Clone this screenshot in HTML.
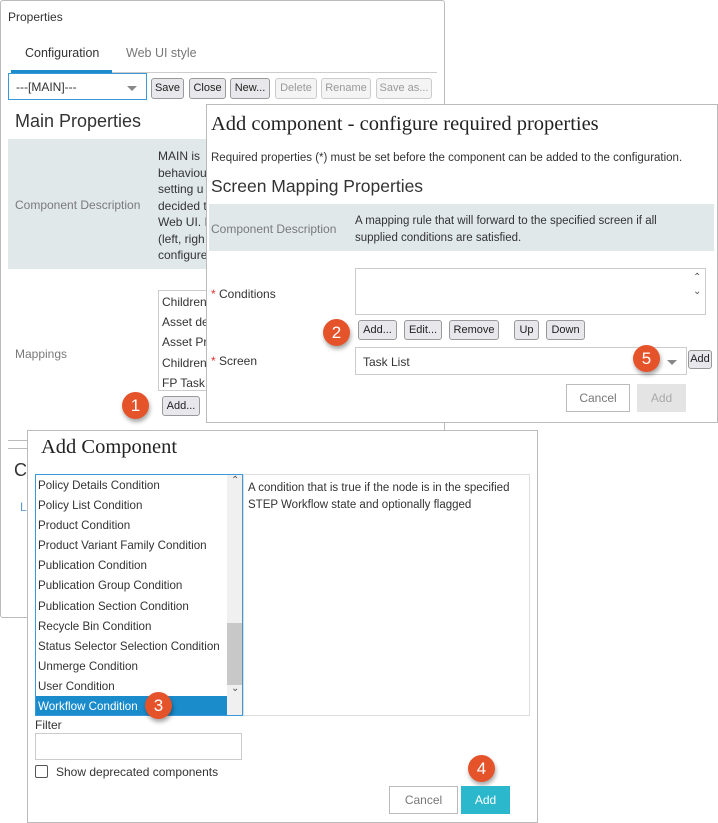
<!DOCTYPE html>
<html><head><meta charset="utf-8"><style>
*{box-sizing:border-box;margin:0;padding:0}
body{width:718px;height:823px;background:#fff;position:relative;overflow:hidden;font-family:"Liberation Sans","DejaVu Sans",sans-serif;font-size:12px;color:#333}
.a{position:absolute;white-space:nowrap}
.btn{position:absolute;border:1px solid #999;border-radius:3px;background:#e8e8ec;font-size:11px;text-align:center;color:#222}
.dis{border-color:#ccc;background:#f4f4f4;color:#999}
.badge{position:absolute;width:27px;height:27px;border-radius:50%;background:#e5532b;color:#fff;font-size:17px;text-align:center;line-height:27px;box-shadow:1px 3px 4px rgba(0,0,0,.35)}
.serif{font-family:"Liberation Serif",serif}
.grey{color:#7a7a7a}
.red{color:#d33}
</style></head><body>
<div class="a" style="left:0;top:0;width:445px;height:618px;border:1px solid #bbb;border-radius:3px;background:#fff"></div>
<div class="a" style="left:8px;top:10px;font-size:12px">Properties</div>
<div class="a" style="left:25px;top:46px;font-size:12.5px;color:#333">Configuration</div>
<div class="a" style="left:126px;top:46px;font-size:12.5px;color:#777">Web UI style</div>
<div class="a" style="left:11px;top:70px;width:101px;height:3px;background:#1a8ccc"></div>
<div class="a" style="left:112px;top:72px;width:325px;height:1px;background:#ccc"></div>
<div class="a" style="left:8px;top:73px;width:139px;height:27px;border:1px solid #3a9ad9;background:#fff"></div>
<div class="a" style="left:16px;top:80px;font-size:12px">---[MAIN]---</div>
<div class="a" style="left:127px;top:86px;border-left:5px solid transparent;border-right:5px solid transparent;border-top:5px solid #888"></div>
<div class="btn" style="left:151px;top:78px;width:33px;height:21px;line-height:19px">Save</div>
<div class="btn" style="left:189px;top:78px;width:37px;height:21px;line-height:19px">Close</div>
<div class="btn" style="left:230px;top:78px;width:40px;height:21px;line-height:19px">New...</div>
<div class="btn dis" style="left:275px;top:78px;width:42px;height:21px;line-height:19px">Delete</div>
<div class="btn dis" style="left:321px;top:78px;width:50px;height:21px;line-height:19px">Rename</div>
<div class="btn dis" style="left:376px;top:78px;width:56px;height:21px;line-height:19px">Save as...</div>
<div class="a" style="left:15px;top:111px;font-size:18px;color:#333">Main Properties</div>
<div class="a" style="left:8px;top:139px;width:436px;height:130px;background:#e0e8ea"></div>
<div class="a grey" style="left:15px;top:198px">Component Description</div>
<div class="a" style="left:158px;top:148px;line-height:16.5px;font-size:12px">MAIN is<br>behaviou<br>setting u<br>decided t<br>Web UI. I<br>(left, righ<br>configure</div>
<div class="a grey" style="left:15px;top:347px">Mappings</div>
<div class="a" style="left:158px;top:290px;width:60px;height:101px;border:1px solid #ccc;border-right:none;padding:1px 0 0 3px;line-height:20.2px">Children<br>Asset de<br>Asset Pr<br>Children<br>FP Task I</div>
<div class="btn" style="left:162px;top:396px;width:38px;height:20px;line-height:18px">Add...</div>
<div class="badge" style="left:122px;top:392px">1</div>
<div class="a" style="left:8px;top:440px;width:22px;height:1px;background:#bbb"></div>
<div class="a" style="left:8px;top:448px;width:22px;height:1px;background:#bbb"></div>
<div class="a" style="left:14px;top:460px;font-size:18px">C</div>
<div class="a" style="left:20px;top:500px;color:#5b9bd5">L</div>

<div class="a" style="left:206px;top:104px;width:512px;height:319px;border:1px solid #bbb;background:#fff"></div>
<div class="a serif" style="left:211px;top:113px;font-size:20.5px;color:#222">Add component - configure required properties</div>
<div class="a" style="left:211px;top:152px;font-size:11.5px">Required properties (*) must be set before the component can be added to the configuration.</div>
<div class="a" style="left:211px;top:176px;font-size:17.5px">Screen Mapping Properties</div>
<div class="a" style="left:209px;top:204px;width:505px;height:47px;background:#e0e8ea"></div>
<div class="a grey" style="left:211px;top:222px">Component Description</div>
<div class="a" style="left:355px;top:213px;line-height:17px;font-size:11.5px">A mapping rule that will forward to the specified screen if all<br>supplied conditions are satisfied.</div>
<div class="a" style="left:211px;top:287px"><span class="red">*</span> Conditions</div>
<div class="a" style="left:355px;top:268px;width:351px;height:47px;border:1px solid #ccc"></div>
<div class="a" style="left:693px;top:271px;font-size:10px;color:#555;line-height:14px">&#8963;<br>&#8964;</div>
<div class="btn" style="left:358px;top:320px;width:39px;height:20px;line-height:18px">Add...</div>
<div class="btn" style="left:404px;top:320px;width:38px;height:20px;line-height:18px">Edit...</div>
<div class="btn" style="left:449px;top:320px;width:50px;height:20px;line-height:18px">Remove</div>
<div class="btn" style="left:514px;top:320px;width:25px;height:20px;line-height:18px">Up</div>
<div class="btn" style="left:546px;top:320px;width:39px;height:20px;line-height:18px">Down</div>
<div class="badge" style="left:323px;top:319px">2</div>
<div class="a" style="left:211px;top:354px"><span class="red">*</span> Screen</div>
<div class="a" style="left:355px;top:347px;width:332px;height:28px;border:1px solid #ccc"></div>
<div class="a" style="left:363px;top:355px">Task List</div>
<div class="a" style="left:667px;top:360px;border-left:5px solid transparent;border-right:5px solid transparent;border-top:5px solid #888"></div>
<div class="badge" style="left:633px;top:345px">5</div>
<div class="btn" style="left:688px;top:350px;width:24px;height:19px;line-height:17px">Add</div>
<div class="a" style="left:566px;top:384px;width:64px;height:28px;border:1px solid #bbb;text-align:center;line-height:26px;color:#777">Cancel</div>
<div class="a" style="left:637px;top:384px;width:49px;height:28px;background:#e4e4e4;text-align:center;line-height:28px;color:#aaa">Add</div>

<div class="a" style="left:27px;top:430px;width:511px;height:393px;border:1px solid #bbb;background:#fff"></div>
<div class="a serif" style="left:41px;top:436px;font-size:20.5px;color:#222">Add Component</div>
<div class="a" style="left:243px;top:474px;width:287px;height:242px;border:1px solid #ddd"></div>
<div class="a" style="left:248px;top:480px;line-height:17px;font-size:11.5px">A condition that is true if the node is in the specified<br>STEP Workflow state and optionally flagged</div>
<div class="a" style="left:35px;top:474px;width:208px;height:242px;border:1px solid #3a9ad9;overflow:hidden">
 <div class="a" style="left:191px;top:0;width:16px;height:240px;background:#f0f0f0"></div>
 <div class="a" style="left:191px;top:148px;width:16px;height:62px;background:#c8c8c8"></div>
 <div class="a" style="left:195px;top:0px;font-size:10px;color:#555">&#8963;</div>
 <div class="a" style="left:195px;top:208px;font-size:10px;color:#555">&#8964;</div>
 <div class="a" style="left:0;top:221px;width:191px;height:20px;background:#1a8ccc"></div>
 <div class="a" style="left:2px;top:1px;line-height:20.1px;font-size:11.6px;color:#333">Policy Details Condition<br>Policy List Condition<br>Product Condition<br>Product Variant Family Condition<br>Publication Condition<br>Publication Group Condition<br>Publication Section Condition<br>Recycle Bin Condition<br>Status Selector Selection Condition<br>Unmerge Condition<br>User Condition<br><span style="color:#fff">Workflow Condition</span></div>
</div>
<div class="badge" style="left:145px;top:692px">3</div>
<div class="a" style="left:35px;top:718px">Filter</div>
<div class="a" style="left:35px;top:733px;width:207px;height:27px;border:1px solid #ccc"></div>
<div class="a" style="left:35px;top:765px;width:13px;height:13px;border:1px solid #555;border-radius:2px"></div>
<div class="a" style="left:56px;top:765px">Show deprecated components</div>
<div class="badge" style="left:468px;top:755px">4</div>
<div class="a" style="left:389px;top:786px;width:69px;height:28px;border:1px solid #bbb;text-align:center;line-height:26px;color:#777">Cancel</div>
<div class="a" style="left:461px;top:786px;width:49px;height:28px;background:#2bb7cc;text-align:center;line-height:28px;color:#fff">Add</div>
</body></html>
